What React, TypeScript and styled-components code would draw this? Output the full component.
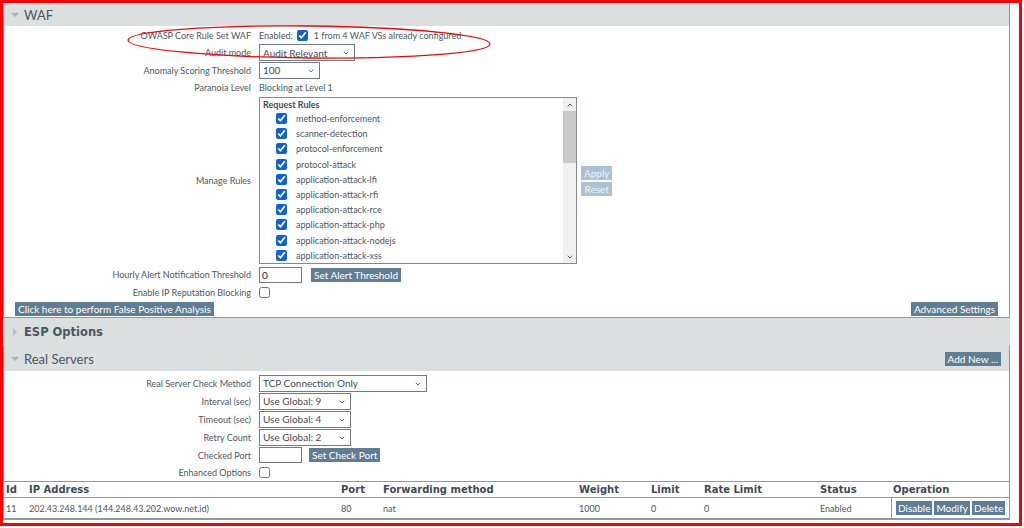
import React from 'react'
import styled, { createGlobalStyle } from 'styled-components'
import { ChevronDown, ChevronUp } from 'lucide-react'

const colors = {
	text: '#4b5763',
	border: '#8e9aa5',
	header: '#dbdfe0',
	button: '#5f7e93',
	buttonDisabled: '#a9c2d5',
	annotation: '#ff0000',
}

const GlobalStyle = createGlobalStyle`
	body {
		margin: 0;
		background: #fff;
		font-family: Lato, 'Noto Sans', sans-serif;
		font-size: 9px;
		color: ${colors.text};
	}
`

const Frame = styled.div`
	position: relative;
	width: 1022px;
	height: 526px;
	box-sizing: border-box;
	border: 3px solid ${colors.annotation};
	padding-right: 9px;
	overflow: hidden;
`

const Panel = styled.section<{ $flat?: boolean }>`
	border: 1px solid ${(p) => (p.$flat ? colors.header : colors.border)};
	border-top-color: ${colors.header};
`

const PanelHeader = styled.div<{ $h: number }>`
	display: flex;
	align-items: center;
	justify-content: space-between;
	height: ${(p) => p.$h}px;
	padding: 0 8px 0 6px;
	background: ${colors.header};
`

const PanelTitle = styled.h2<{ $bold?: boolean }>`
	display: flex;
	align-items: center;
	gap: 5px;
	margin: 0;
	font-family: ${(p) => (p.$bold ? "'DejaVu Sans'" : 'Lato')}, sans-serif;
	font-size: ${(p) => (p.$bold ? '11.5px' : '13px')};
	font-weight: ${(p) => (p.$bold ? 700 : 400)};
	color: #4a5866;
`

const Caret = styled.span<{ $open?: boolean }>`
	width: 0;
	height: 0;
	${(p) =>
		p.$open
			? `border-left: 4px solid transparent;
	border-right: 4px solid transparent;
	border-top: 4px solid #a7afb6;
	margin-left: 1px;`
			: `border-top: 4px solid transparent;
	border-bottom: 4px solid transparent;
	border-left: 4px solid #b5bcc2;
	margin: 0 2px 0 3px;`}
`

const Body = styled.div<{ $pt: number }>`
	padding-top: ${(p) => p.$pt}px;
`

const FieldRow = styled.div<{ $h: number; $mt?: number }>`
	display: grid;
	grid-template-columns: 247px 1fr;
	column-gap: 8px;
	align-items: center;
	height: ${(p) => p.$h}px;
	margin-top: ${(p) => p.$mt ?? 0}px;
`

const Label = styled.div`
	text-align: right;
	white-space: nowrap;
`

const Value = styled.div<{ $gap?: number }>`
	display: flex;
	align-items: center;
	gap: ${(p) => p.$gap ?? 4}px;
	white-space: nowrap;
`

const Check = styled.input.attrs({ type: 'checkbox', readOnly: true })`
	width: 11px;
	height: 11px;
	margin: 0;
	flex: none;
	accent-color: #0f62d6;
`

const SelectWrap = styled.div<{ $w: number }>`
	position: relative;
	width: ${(p) => p.$w}px;
	height: 17px;
	box-sizing: border-box;
	border: 1px solid #6f7c88;
	background: #fff;
	font-size: 10px;
	color: #3f4b56;
	display: flex;
	align-items: center;
	padding-left: 3px;
	svg {
		position: absolute;
		right: 4px;
		top: 4px;
	}
`

const Select = ({ value, width }: { value: string; width: number }) => (
	<SelectWrap $w={width}>
		{value}
		<ChevronDown size={8} strokeWidth={2.5} color="#45515c" />
	</SelectWrap>
)

const TextInput = styled.div<{ $w: number }>`
	width: ${(p) => p.$w}px;
	height: 16px;
	box-sizing: border-box;
	border: 1px solid #6f7c88;
	font-size: 10px;
	color: #222;
	padding-left: 2px;
	display: flex;
	align-items: center;
`

const Button = styled.button<{ $disabled?: boolean; $compact?: boolean }>`
	height: 14px;
	padding: 0 ${(p) => (p.$compact ? 2 : 3)}px;
	border: none;
	background: ${(p) => (p.$disabled ? colors.buttonDisabled : colors.button)};
	color: ${(p) => (p.$disabled ? '#eef4f8' : '#fff')};
	font-family: Lato, sans-serif;
	font-size: 10px;
	line-height: 14px;
	white-space: nowrap;
	cursor: pointer;
`

const ListArea = styled.div`
	display: flex;
	align-items: center;
	gap: 4px;
`

const ListBox = styled.div`
	display: flex;
	width: 318px;
	height: 167px;
	box-sizing: border-box;
	border: 1px solid #7f8b96;
	background: #fff;
`

const ListItems = styled.div`
	flex: 1;
	overflow: hidden;
	padding: 1px 0 0 3px;
`

const ListGroup = styled.div`
	font-weight: 700;
	color: #3f4b57;
	height: 12px;
	line-height: 12px;
`

const ListItem = styled.div`
	display: flex;
	align-items: center;
	gap: 9px;
	height: 15.2px;
	padding-left: 13px;
`

const Scrollbar = styled.div`
	display: flex;
	flex-direction: column;
	width: 13px;
	background: #f0f0f0;
	align-items: center;
`

const ScrollArrow = styled.div`
	height: 13px;
	display: flex;
	align-items: center;
	justify-content: center;
`

const ScrollThumb = styled.div`
	width: 13px;
	height: 52px;
	background: #c9c9c9;
`

const ScrollTrack = styled.div`
	flex: 1;
`

const SideButtons = styled.div`
	display: flex;
	flex-direction: column;
	gap: 2px;
`

const Footer = styled.div`
	display: flex;
	justify-content: space-between;
	align-items: center;
	height: 15px;
	padding: 0 11px 1px 11px;
`

const Table = styled.div`
	border-top: 1px solid ${colors.border};
`

const TableRow = styled.div<{ $head?: boolean }>`
	display: grid;
	grid-template-columns: 23px 312px 42px 196px 72px 53px 116px 73px 1fr;
	height: ${(p) => (p.$head ? 15 : 20)}px;
	border-bottom: 1px solid ${colors.border};
	font-family: ${(p) => (p.$head ? "'DejaVu Sans'" : 'Lato')}, sans-serif;
	font-size: ${(p) => (p.$head ? '10px' : '9px')};
	font-weight: ${(p) => (p.$head ? 700 : 400)};
	color: ${(p) => (p.$head ? '#3e4a56' : colors.text)};
`

const Cell = styled.div<{ $divider?: boolean }>`
	display: flex;
	align-items: center;
	gap: 2px;
	white-space: nowrap;
	border-left: ${(p) => (p.$divider ? `1px solid ${colors.border}` : 'none')};
	padding-left: ${(p) => (p.$divider ? '4px' : '2px')};
`

const Annotation = styled.svg`
	position: absolute;
	left: 0;
	top: 0;
	pointer-events: none;
`

const rules = [
	'method-enforcement',
	'scanner-detection',
	'protocol-enforcement',
	'protocol-attack',
	'application-attack-lfi',
	'application-attack-rfi',
	'application-attack-rce',
	'application-attack-php',
	'application-attack-nodejs',
	'application-attack-xss',
]

export default function App() {
	return (
		<>
			<GlobalStyle />
			<Frame>
				<Panel>
					<PanelHeader $h={22}>
						<PanelTitle>
							<Caret $open />
							WAF
						</PanelTitle>
					</PanelHeader>
					<Body $pt={1}>
						<FieldRow $h={17}>
							<Label>OWASP Core Rule Set WAF</Label>
							<Value $gap={4}>
								Enabled:
								<Check defaultChecked />
								<span style={{ marginLeft: 2 }}>1 from 4 WAF VSs already configured</span>
							</Value>
						</FieldRow>
						<FieldRow $h={17}>
							<Label>Audit mode</Label>
							<Value>
								<Select value="Audit Relevant" width={96} />
							</Value>
						</FieldRow>
						<FieldRow $h={18}>
							<Label>Anomaly Scoring Threshold</Label>
							<Value>
								<Select value="100" width={61} />
							</Value>
						</FieldRow>
						<FieldRow $h={17}>
							<Label>Paranoia Level</Label>
							<Value>Blocking at Level 1</Value>
						</FieldRow>
						<FieldRow $h={167} $mt={1}>
							<Label>Manage Rules</Label>
							<ListArea>
								<ListBox>
									<ListItems>
										<ListGroup>Request Rules</ListGroup>
										{rules.map((r) => (
											<ListItem key={r}>
												<Check defaultChecked />
												{r}
											</ListItem>
										))}
										<ListItem>
											<Check defaultChecked />
										</ListItem>
									</ListItems>
									<Scrollbar>
										<ScrollArrow>
											<ChevronUp size={8} strokeWidth={3} color="#606060" />
										</ScrollArrow>
										<ScrollThumb />
										<ScrollTrack />
										<ScrollArrow>
											<ChevronDown size={8} strokeWidth={3} color="#606060" />
										</ScrollArrow>
									</Scrollbar>
								</ListBox>
								<SideButtons>
									<Button $disabled>Apply</Button>
									<Button $disabled>Reset</Button>
								</SideButtons>
							</ListArea>
						</FieldRow>
						<FieldRow $h={19} $mt={1}>
							<Label>Hourly Alert Notification Threshold</Label>
							<Value $gap={9}>
								<TextInput $w={43}>0</TextInput>
								<Button>Set Alert Threshold</Button>
							</Value>
						</FieldRow>
						<FieldRow $h={17}>
							<Label>Enable IP Reputation Blocking</Label>
							<Value>
								<Check />
							</Value>
						</FieldRow>
						<Footer>
							<Button>Click here to perform False Positive Analysis</Button>
							<Button>Advanced Settings</Button>
						</Footer>
					</Body>
				</Panel>
				<Panel $flat>
					<PanelHeader $h={25}>
						<PanelTitle $bold>
							<Caret />
							ESP Options
						</PanelTitle>
					</PanelHeader>
				</Panel>
				<Panel>
					<PanelHeader $h={25}>
						<PanelTitle>
							<Caret $open />
							Real Servers
						</PanelTitle>
						<Button>Add New ...</Button>
					</PanelHeader>
					<Body $pt={3}>
						<FieldRow $h={18}>
							<Label>Real Server Check Method</Label>
							<Value>
								<Select value="TCP Connection Only" width={168} />
							</Value>
						</FieldRow>
						<FieldRow $h={18}>
							<Label>Interval (sec)</Label>
							<Value>
								<Select value="Use Global: 9" width={92} />
							</Value>
						</FieldRow>
						<FieldRow $h={18}>
							<Label>Timeout (sec)</Label>
							<Value>
								<Select value="Use Global: 4" width={92} />
							</Value>
						</FieldRow>
						<FieldRow $h={18}>
							<Label>Retry Count</Label>
							<Value>
								<Select value="Use Global: 2" width={92} />
							</Value>
						</FieldRow>
						<FieldRow $h={18}>
							<Label>Checked Port</Label>
							<Value $gap={7}>
								<TextInput $w={43} />
								<Button>Set Check Port</Button>
							</Value>
						</FieldRow>
						<FieldRow $h={17}>
							<Label>Enhanced Options</Label>
							<Value>
								<Check />
							</Value>
						</FieldRow>
						<Table>
							<TableRow $head>
								<Cell>Id</Cell>
								<Cell>IP Address</Cell>
								<Cell>Port</Cell>
								<Cell>Forwarding method</Cell>
								<Cell>Weight</Cell>
								<Cell>Limit</Cell>
								<Cell>Rate Limit</Cell>
								<Cell>Status</Cell>
								<Cell>Operation</Cell>
							</TableRow>
							<TableRow>
								<Cell>11</Cell>
								<Cell>202.43.248.144 (144.248.43.202.wow.net.id)</Cell>
								<Cell>80</Cell>
								<Cell>nat</Cell>
								<Cell>1000</Cell>
								<Cell>0</Cell>
								<Cell>0</Cell>
								<Cell>Enabled</Cell>
								<Cell $divider>
									<Button $compact>Disable</Button>
									<Button $compact>Modify</Button>
									<Button $compact>Delete</Button>
								</Cell>
							</TableRow>
						</Table>
					</Body>
				</Panel>
				<Annotation width="1016" height="520">
					<ellipse
						cx="306"
						cy="39"
						rx="181"
						ry="16"
						fill="none"
						stroke={colors.annotation}
						strokeWidth="1.3"
						transform="rotate(0.6 306 39)"
					/>
				</Annotation>
			</Frame>
		</>
	)
}
